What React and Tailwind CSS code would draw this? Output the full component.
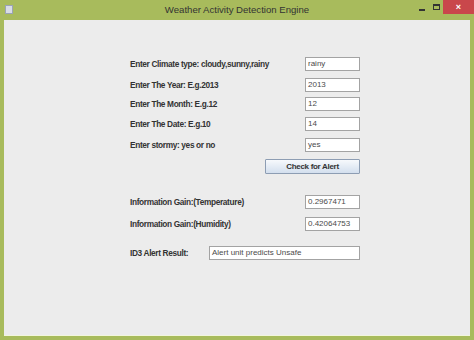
import React from "react";

const Field = ({ value, width = "w-[55px]" }) => (
  <div
    className={`${width} h-[14px] bg-white border border-[#a3a3a3] flex items-center px-[2px] text-[8px] text-[#4a4a4a] leading-none`}
  >
    {value}
  </div>
);

const Row = ({ label, value, className = "", fieldWidth }) => (
  <div className={`flex items-center justify-between h-[14px] ${className}`}>
    <span className="font-bold text-[8.3px] tracking-[-0.35px] text-[#333] leading-none">
      {label}
    </span>
    <Field value={value} width={fieldWidth} />
  </div>
);

export default function App() {
  return (
    <div
      className="w-[474px] h-[340px] bg-[#a8bb5c] flex flex-col overflow-hidden"
      style={{ fontFamily: '"Liberation Sans", Arial, sans-serif' }}
    >
      {/* Title bar */}
      <div className="h-[20px] flex items-start relative">
        <div className="mt-[5px] ml-[5px] w-[8px] h-[9px] bg-[#d9dde6] border border-[#9aa3b5]" />
        <div className="absolute left-0 right-0 top-[5px] text-center text-[9.6px] text-[#333] leading-none pointer-events-none">
          Weather Activity Detection Engine
        </div>
        <div className="flex items-start ml-auto">
          <div className="w-[6px] h-[2px] bg-[#333] mt-[9px] mr-[8px]" />
          <div className="w-[7px] h-[6px] border border-[#333] border-t-2 mt-[4px] mr-[3px]" />
          <div className="w-[31px] h-[14px] bg-[#c9474b] flex items-center justify-center text-white text-[9px] font-bold leading-none">
            ×
          </div>
        </div>
      </div>

      {/* Content */}
      <div className="mx-[4px] h-[316px] bg-[#ececec] border-b border-[#f2f6dc]">
        <div className="ml-[126px] w-[230px] pt-[37px] flex flex-col">
          <Row label="Enter Climate type: cloudy,sunny,rainy" value="rainy" />
          <Row label="Enter The Year: E.g.2013" value="2013" className="mt-[7px]" />
          <Row label="Enter The Month: E.g.12" value="12" className="mt-[5px]" />
          <Row label="Enter The Date: E.g.10" value="14" className="mt-[6px]" />
          <Row label="Enter stormy: yes or no" value="yes" className="mt-[7px]" />

          <div className="flex justify-end mt-[7px]">
            <button className="w-[95px] h-[15px] border border-[#8d9db3] bg-gradient-to-b from-[#f7f9fc] to-[#d3dfee] text-[8px] font-bold tracking-[-0.3px] text-[#333] leading-none rounded-[1px]">
              Check for Alert
            </button>
          </div>

          <Row
            label="Information Gain:(Temperature)"
            value="0.2967471"
            className="mt-[21px]"
          />
          <Row
            label="Information Gain:(Humidity)"
            value="0.42064753"
            className="mt-[8px]"
          />

          <div className="flex items-center h-[14px] mt-[15px]">
            <span className="w-[79px] font-bold text-[8.3px] tracking-[-0.35px] text-[#333] leading-none">
              ID3 Alert Result:
            </span>
            <Field value="Alert unit predicts Unsafe" width="w-[151px]" />
          </div>
        </div>
      </div>
    </div>
  );
}
